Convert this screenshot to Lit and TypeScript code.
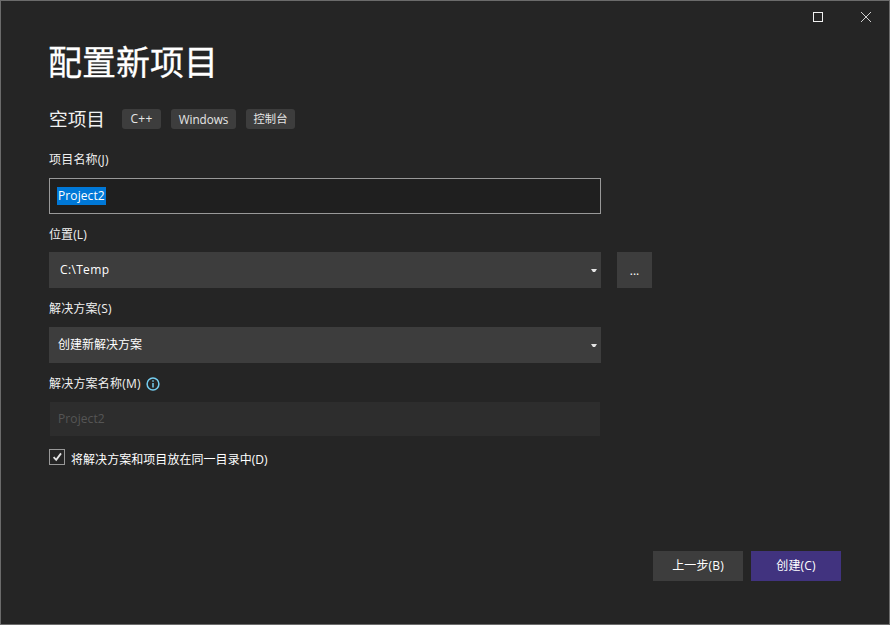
import { LitElement, html, css, svg } from "lit";
import { customElement, property } from "lit/decorators.js";

const arrow = html`<svg class="arrow" width="6" height="3" viewBox="0 0 6 3">
  ${svg`<path d="M0 0H6L4 3H2Z" fill="#e4e4e4" />`}
</svg>`;

@customElement("tag-chip")
export class TagChip extends LitElement {
  static styles = css`
    :host {
      display: flex;
      align-items: center;
      justify-content: center;
      box-sizing: border-box;
      height: 20px;
      border-radius: 3px;
      background: #3d3d3d;
      color: #e6e6e6;
      line-height: 20px;
      white-space: nowrap;
    }
  `;
  render() {
    return html`<slot></slot>`;
  }
}

@customElement("select-box")
export class SelectBox extends LitElement {
  @property() value = "";
  static styles = css`
    :host {
      display: flex;
      align-items: center;
      justify-content: space-between;
      box-sizing: border-box;
      width: 552px;
      height: 36px;
      padding: 0 4px 0 9px;
      background: #3d3d3d;
      color: #fff;
      line-height: 18px;
    }
    .arrow {
      display: block;
      margin-top: 1px;
    }
  `;
  render() {
    return html`<span>${this.value}</span>${arrow}`;
  }
}

@customElement("app-root")
export class AppRoot extends LitElement {
  static styles = css`
    :host {
      display: flex;
      flex-direction: column;
      box-sizing: border-box;
      width: 890px;
      height: 625px;
      border: 1px solid #6b6b6b;
      background: #252525;
      color: #f1f1f1;
      font: 12px/18px "Open Sans", "Noto Sans CJK SC", sans-serif;
      white-space: nowrap;
      overflow: hidden;
    }
    .bar {
      display: flex;
      justify-content: flex-end;
      gap: 38px;
      height: 32px;
      padding: 11px 18px 0 0;
      box-sizing: border-box;
    }
    .bar svg {
      display: block;
    }
    main {
      display: flex;
      flex-direction: column;
      align-items: flex-start;
      padding-left: 48px;
    }
    h1 {
      margin: 4px 0 0 -1px;
      height: 50px;
      font-size: 34px;
      line-height: 50px;
      font-weight: 400;
      color: #fff;
      -webkit-text-stroke: 0.3px #fff;
    }
    .kind {
      display: flex;
      align-items: center;
      height: 28px;
      margin-top: 18px;
    }
    .kind h2 {
      width: 73px;
      margin: 0;
      font-size: 18.7px;
      line-height: 28px;
      font-weight: 400;
    }
    .kind tag-chip + tag-chip {
      margin-left: 10px;
    }
    .cpp {
      width: 39px;
      letter-spacing: 0.3px;
    }
    .win {
      width: 65px;
      font-size: 11.7px;
    }
    .con {
      width: 49px;
      font-size: 11.3px;
    }
    .label {
      display: flex;
      align-items: center;
      height: 18px;
    }
    .l1 {
      margin: 18px 0 9px;
      letter-spacing: 0.2px;
    }
    .l2 {
      margin: 12px 0 8px;
      letter-spacing: 0.1px;
    }
    .l3 {
      margin: 12px 0 9px;
      letter-spacing: 0.15px;
    }
    .l4 {
      margin: 12px 0 9px;
      letter-spacing: 0.2px;
    }
    .name {
      display: flex;
      align-items: center;
      box-sizing: border-box;
      width: 552px;
      height: 36px;
      padding-left: 7px;
      border: 1px solid #999;
      background: #1f1f1f;
    }
    .picked {
      padding: 0 1px;
      background: #0078d7;
      color: #fff;
      letter-spacing: 0.1px;
    }
    .row {
      display: flex;
      gap: 16px;
    }
    .path {
      padding-left: 11px;
      letter-spacing: 0.35px;
    }
    .more {
      display: flex;
      align-items: center;
      justify-content: center;
      box-sizing: border-box;
      width: 35px;
      height: 36px;
      padding-top: 2px;
      background: #3d3d3d;
      color: #fff;
    }
    .info {
      margin-left: 5.5px;
    }
    .off {
      display: flex;
      align-items: center;
      box-sizing: border-box;
      width: 550px;
      height: 34px;
      margin-left: 1px;
      padding-left: 8px;
      background: #2d2d2d;
      color: #555;
      letter-spacing: 0.1px;
    }
    .check {
      display: flex;
      align-items: flex-start;
      gap: 6px;
      margin-top: 13px;
      color: #fff;
      letter-spacing: 0.05px;
    }
    .box {
      box-sizing: border-box;
      width: 16px;
      height: 16px;
      border: 1px solid #999;
    }
    .box svg {
      display: block;
    }
    .check span {
      margin-top: 2px;
    }
    footer {
      display: flex;
      justify-content: flex-end;
      gap: 8px;
      margin-top: auto;
      padding: 0 48px 43px 0;
    }
    .btn {
      width: 90px;
      height: 30px;
      line-height: 30px;
      text-align: center;
      background: #3d3d3d;
      color: #fff;
      letter-spacing: 0.15px;
    }
    .primary {
      background: #41337f;
    }
  `;

  render() {
    return html`
      <div class="bar">
        <svg width="10" height="10" viewBox="0 0 10 10">
          <rect x=".5" y=".5" width="9" height="9" fill="none" stroke="#f1f1f1" />
        </svg>
        <svg width="10" height="10" viewBox="0 0 10 10">
          <path d="M0 0L10 10M10 0L0 10" fill="none" stroke="#d0d0d0" stroke-width="1" />
        </svg>
      </div>
      <main>
        <h1>配置新项目</h1>
        <div class="kind">
          <h2>空项目</h2>
          <tag-chip class="cpp">C++</tag-chip>
          <tag-chip class="win">Windows</tag-chip>
          <tag-chip class="con">控制台</tag-chip>
        </div>
        <div class="label l1">项目名称(J)</div>
        <div class="name"><span class="picked">Project2</span></div>
        <div class="label l2">位置(L)</div>
        <div class="row">
          <select-box class="path" value="C:\\Temp"></select-box>
          <div class="more">...</div>
        </div>
        <div class="label l3">解决方案(S)</div>
        <select-box value="创建新解决方案"></select-box>
        <div class="label l4">
          解决方案名称(M)
          <svg class="info" width="14" height="14" viewBox="0 0 14 14">
            <circle cx="7" cy="7" r="5.9" fill="none" stroke="#75cdf0" stroke-width="1.5" />
            <path d="M7 3.3V4.8M7 6V10.5" stroke="#75cdf0" stroke-width="1.5" />
          </svg>
        </div>
        <div class="off">Project2</div>
        <div class="check">
          <div class="box">
            <svg width="14" height="14" viewBox="0 0 14 14">
              <path d="M3.6 7.2L6.2 9.9L11 3.4" fill="none" stroke="#e4e4e4" stroke-width="1.8" />
            </svg>
          </div>
          <span>将解决方案和项目放在同一目录中(D)</span>
        </div>
      </main>
      <footer>
        <div class="btn">上一步(B)</div>
        <div class="btn primary">创建(C)</div>
      </footer>
    `;
  }
}
